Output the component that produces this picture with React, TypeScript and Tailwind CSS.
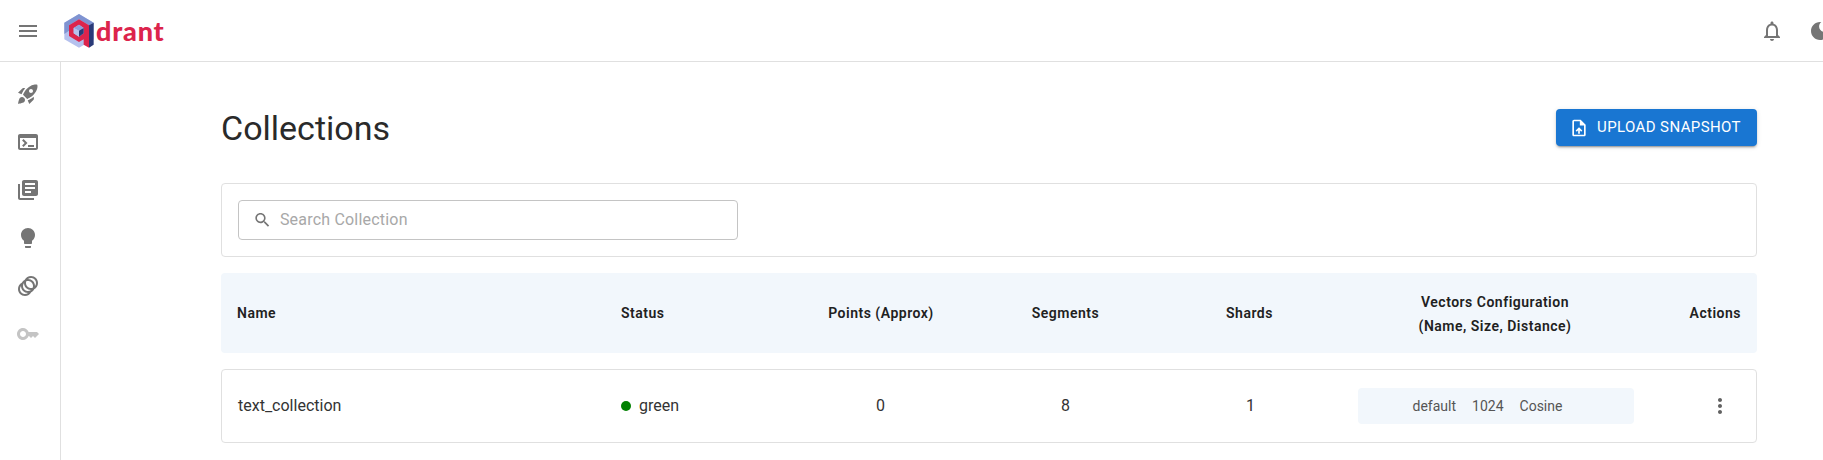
const ICONS = {
  menu: "M3 18h18v-2H3v2zm0-5h18v-2H3v2zm0-7v2h18V6H3z",
  rocket:
    "M9.19 6.35c-2.04 2.29-3.44 5.58-3.57 5.89L2 10.69l4.05-4.05c.47-.47 1.15-.68 1.81-.55l1.33.26zM11.17 17s3.74-1.55 5.89-3.7c5.4-5.4 4.5-9.62 4.21-10.57-.95-.3-5.17-1.19-10.57 4.21C8.55 9.09 7 12.83 7 12.83L11.17 17zm6.48-2.19c-2.29 2.04-5.58 3.44-5.89 3.57L13.31 22l4.05-4.05c.47-.47.68-1.15.55-1.81l-.26-1.33zM9 18c0 .83-.34 1.58-.88 2.12C6.94 21.3 2 22 2 22s.7-4.94 1.88-6.12C4.42 15.34 5.17 15 6 15c1.66 0 3 1.34 3 3zm4-9c0-1.1.9-2 2-2s2 .9 2 2-.9 2-2 2-2-.9-2-2z",
  terminal:
    "M20 4H4c-1.1 0-2 .9-2 2v12c0 1.1.9 2 2 2h16c1.1 0 2-.9 2-2V6c0-1.1-.9-2-2-2zm0 14H4V8h16v10zm-2-1h-6v-2h6v2zM7.5 17l-1.41-1.41L8.67 13l-2.59-2.59L7.5 9l4 4-4 4z",
  books:
    "M4 6H2v14c0 1.1.9 2 2 2h14v-2H4V6zm16-4H8c-1.1 0-2 .9-2 2v12c0 1.1.9 2 2 2h12c1.1 0 2-.9 2-2V4c0-1.1-.9-2-2-2zm-1 9H9V9h10v2zm-4 4H9v-2h6v2zm4-8H9V5h10v2z",
  bulb: "M9 21c0 .55.45 1 1 1h4c.55 0 1-.45 1-1v-1H9v1zm3-19C8.14 2 5 5.14 5 9c0 2.38 1.19 4.47 3 5.74V17c0 .55.45 1 1 1h6c.55 0 1-.45 1-1v-2.26c1.81-1.27 3-3.36 3-5.74 0-3.86-3.14-7-7-7z",
  rings:
    "M15 2c-2.71 0-5.05 1.54-6.22 3.78-1.28.67-2.34 1.72-3 3C3.54 9.95 2 12.29 2 15c0 3.87 3.13 7 7 7 2.71 0 5.05-1.54 6.22-3.78 1.28-.67 2.34-1.72 3-3C20.46 14.05 22 11.71 22 9c0-3.87-3.13-7-7-7zM9 20c-2.76 0-5-2.24-5-5 0-1.12.37-2.16 1-3 0 3.87 3.13 7 7 7-.84.63-1.88 1-3 1zm3-3c-2.76 0-5-2.24-5-5 0-1.12.37-2.16 1-3 0 3.86 3.13 6.99 7 7-.84.63-1.88 1-3 1zm4.7-3.3c-.53.19-1.1.3-1.7.3-2.76 0-5-2.24-5-5 0-.6.11-1.17.3-1.7.53-.19 1.1-.3 1.7-.3 2.76 0 5 2.24 5 5 0 .6-.11 1.17-.3 1.7zM19 12c0-3.86-3.13-6.99-7-7 .84-.63 1.87-1 3-1 2.76 0 5 2.24 5 5 0 1.12-.37 2.16-1 3z",
  key: "M21 10h-8.35C11.83 7.67 9.61 6 7 6c-3.31 0-6 2.69-6 6s2.69 6 6 6c2.61 0 4.83-1.67 5.65-4H13l2 2 2-2 2 2 4-4.04L21 10zM7 15c-1.65 0-3-1.35-3-3s1.35-3 3-3 3 1.35 3 3-1.35 3-3 3z",
  bell: "M12 22c1.1 0 2-.9 2-2h-4c0 1.1.9 2 2 2zm6-6v-5c0-3.07-1.63-5.64-4.5-6.32V4c0-.83-.67-1.5-1.5-1.5s-1.5.67-1.5 1.5v.68C7.64 5.36 6 7.92 6 11v5l-2 2v1h16v-1l-2-2zm-2 1H8v-6c0-2.48 1.51-4.5 4-4.5s4 2.02 4 4.5v6z",
  moon: "M12 3c-4.97 0-9 4.03-9 9s4.03 9 9 9 9-4.03 9-9c0-.46-.04-.92-.1-1.36-.98 1.37-2.58 2.26-4.4 2.26-2.98 0-5.4-2.42-5.4-5.4 0-1.81.89-3.42 2.26-4.4-.44-.06-.9-.1-1.36-.1z",
  upload:
    "M14 2H6c-1.1 0-1.99.9-1.99 2L4 20c0 1.1.89 2 1.99 2H18c1.1 0 2-.9 2-2V8l-6-6zm4 18H6V4h7v5h5v11zM8 15.01l1.41 1.41L11 14.84V19h2v-4.16l1.59 1.59L16 15.01 12.01 11z",
  search:
    "M15.5 14h-.79l-.28-.27C15.41 12.59 16 11.11 16 9.5 16 5.91 13.09 3 9.5 3S3 5.91 3 9.5 5.91 16 9.5 16c1.61 0 3.09-.59 4.23-1.57l.27.28v.79l5 4.99L20.49 19l-4.99-5zm-6 0C7.01 14 5 11.99 5 9.5S7.01 5 9.5 5 14 7.01 14 9.5 11.99 14 9.5 14z",
  more: "M12 8c1.1 0 2-.9 2-2s-.9-2-2-2-2 .9-2 2 .9 2 2 2zm0 2c-1.1 0-2 .9-2 2s.9 2 2 2 2-.9 2-2-.9-2-2-2zm0 6c-1.1 0-2 .9-2 2s.9 2 2 2 2-.9 2-2-.9-2-2-2z",
};

type IconName = keyof typeof ICONS;

function Icon({ name, className = "h-6 w-6" }: { name: IconName; className?: string }) {
  return (
    <svg viewBox="0 0 24 24" fill="currentColor" className={className} aria-hidden="true">
      <path d={ICONS[name]} />
    </svg>
  );
}

function Logo() {
  return (
    <div className="flex items-center">
      <svg viewBox="0 0 88 102" className="h-[34px] w-[30px]" aria-hidden="true">
        <polygon points="0,26 44,0 88,26 88,76 44,101 0,76" fill="#b5c1ee" />
        <polygon points="0,26 44,0 88,26 74,34 44,16 14,34 14,50 0,60" fill="#7f93d1" />
        <polygon points="74,34 88,26 88,92 74,101" fill="#2a3a78" />
        <path
          fillRule="evenodd"
          d="M14 34 44 16 74 34V101L58 92V76L44 84 14 66ZM28 42V58L44 68 58 58V42L44 32Z"
          fill="#dc244c"
        />
        <polygon points="28,42 44,32 58,42 44,50" fill="#8ea1dc" />
        <polygon points="28,42 44,50 44,68 28,58" fill="#b5c1ee" />
        <polygon points="44,50 58,42 58,58 44,68" fill="#2a3a78" />
      </svg>
      <span className="ml-[2px] font-['Lato',sans-serif] text-[27px] leading-none font-black tracking-[0.03em] text-[#dc244c]">
        drant
      </span>
    </div>
  );
}

const NAV: { icon: IconName; color: string }[] = [
  { icon: "rocket", color: "text-[#757575]" },
  { icon: "terminal", color: "text-[#757575]" },
  { icon: "books", color: "text-[#757575]" },
  { icon: "bulb", color: "text-[#757575]" },
  { icon: "rings", color: "text-[#757575]" },
  { icon: "key", color: "text-[#c4c4c4]" },
];

const COLUMNS = "grid grid-cols-[384px_182px_185px_185px_185px_306px_1fr] items-center";

export default function App() {
  return (
    <div className="h-[460px] w-[1823px] overflow-hidden bg-white font-['Roboto',sans-serif] text-[#212121]">
      <header className="flex h-[62px] w-[1844px] items-center border-b border-[#e0e0e0] bg-white">
        <button className="flex w-[56px] justify-center text-[#757575]">
          <Icon name="menu" />
        </button>
        <div className="ml-[8px]">
          <Logo />
        </div>
        <div className="ml-auto flex items-center">
          <button className="flex w-[48px] justify-center text-[#757575]">
            <Icon name="bell" />
          </button>
          <button className="flex w-[48px] justify-center text-[#757575]">
            <Icon name="moon" />
          </button>
        </div>
      </header>

      <div className="flex h-[398px]">
        <nav className="w-[61px] shrink-0 border-r border-[#e0e0e0] py-2">
          {NAV.map((item) => (
            <div key={item.icon} className={`flex h-12 w-[56px] items-center justify-center ${item.color}`}>
              <Icon name={item.icon} />
            </div>
          ))}
        </nav>

        <main className="flex-1 pr-[66px] pl-[160px]">
          <div className="flex h-[121px] items-start justify-between pt-[46px]">
            <h1 className="text-[34px] leading-[1.235] font-normal text-[#2a2a2a]">Collections</h1>
            <button className="mt-px flex h-[37px] w-[201px] items-center justify-center gap-2 rounded bg-[#1976d2] pr-[3px] text-[15px] font-normal tracking-[0.4px] text-white uppercase shadow-[0_3px_1px_-2px_rgba(0,0,0,0.2),0_2px_2px_0_rgba(0,0,0,0.14),0_1px_5px_0_rgba(0,0,0,0.12)]">
              <Icon name="upload" className="h-5 w-5" />
              Upload snapshot
            </button>
          </div>

          <section className="flex h-[74px] items-center rounded border border-[#e0e0e0] px-4">
            <div className="flex h-10 w-[500px] items-center rounded border border-[#c4c4c4] pl-[14px] text-[#757575]">
              <Icon name="search" className="h-5 w-5" />
              <input
                placeholder="Search Collection"
                className="ml-2 w-full bg-transparent text-[16px] tracking-[0.2px] text-[#212121] outline-none placeholder:text-[#a8a8a8]"
              />
            </div>
          </section>

          <div className={`${COLUMNS} mt-4 h-20 rounded bg-[#f2f7fc] text-[14px] font-semibold tracking-[0.5px]`}>
            <div className="pl-4">Name</div>
            <div className="pl-4">Status</div>
            <div className="pl-[3px] text-center">Points (Approx)</div>
            <div className="pl-[2px] text-center">Segments</div>
            <div className="text-center">Shards</div>
            <div className="pt-px text-center leading-[24px]">
              Vectors Configuration
              <br />
              (Name, Size, Distance)
            </div>
            <div className="pr-4 text-right">Actions</div>
          </div>

          <div className={`${COLUMNS} mt-4 h-[74px] rounded border border-[#e0e0e0] text-[16px] text-[#333333]`}>
            <div className="pl-4">text_collection</div>
            <div className="flex items-center gap-2 pl-[15px]">
              <span className="h-[10px] w-[10px] rounded-full bg-[#008000]" />
              green
            </div>
            <div className="text-center">0</div>
            <div className="text-center">8</div>
            <div className="text-center">1</div>
            <div className="px-[15px]">
              <div className="flex h-9 items-center justify-center gap-4 rounded bg-[#f2f7fc] pr-[17px] text-[14px] text-[#555555]">
                <span>default</span>
                <span>1024</span>
                <span>Cosine</span>
              </div>
            </div>
            <div className="flex justify-end pr-[24px] text-[#616161]">
              <Icon name="more" />
            </div>
          </div>
        </main>
      </div>
    </div>
  );
}
